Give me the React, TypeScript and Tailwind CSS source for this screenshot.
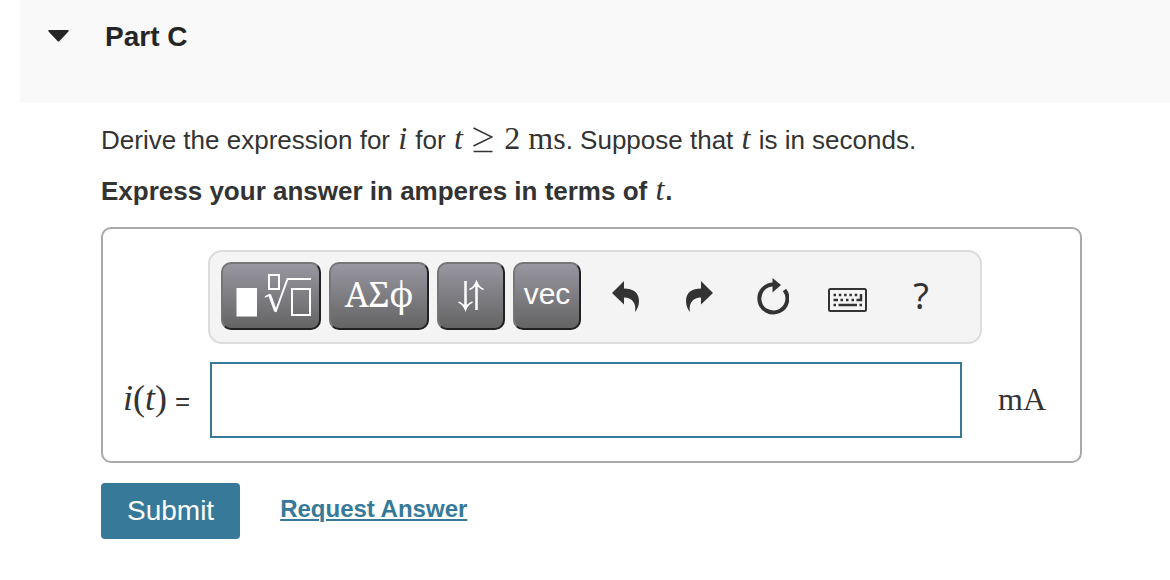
import { useState, type ReactNode } from "react";

function MathVar({ children }: { children: ReactNode }) {
  return (
    <span className="mx-px font-['Liberation_Serif',serif] text-[32px] leading-none font-normal italic">
      {children}
    </span>
  );
}

function MathText({ children }: { children: ReactNode }) {
  return (
    <span className="font-['Liberation_Serif',serif] text-[32px] leading-none font-normal">
      {children}
    </span>
  );
}

function PaletteButton({ label, wide, children }: { label: string; wide?: boolean; children: ReactNode }) {
  return (
    <button
      type="button"
      aria-label={label}
      className={`${wide ? "w-25" : "w-17"} flex h-17 shrink-0 items-center justify-center rounded-[10px] border-2 border-t-[#767676] border-r-[#212121] border-b-[#212121] border-l-[#767676] bg-linear-to-b from-[#9a98a2] to-[#636363] bg-origin-border text-white`}
    >
      {children}
    </button>
  );
}

function ToolButton({ label, children }: { label: string; children: ReactNode }) {
  return (
    <button type="button" aria-label={label} className="flex h-17 w-[74px] shrink-0 items-center justify-center text-[#333]">
      {children}
    </button>
  );
}

function TemplatesIcon() {
  return (
    <svg width="80" height="44" viewBox="-2 0 80 44" className="shrink-0" fill="none" stroke="currentColor" aria-hidden="true">
      <rect x="3.500" y="14" width="20.500" height="28.500" fill="currentColor" stroke="none" />
      <rect x="36" y="1" width="10" height="14" strokeWidth="2" />
      <path d="M32 23L37 20.500" strokeWidth="1.500" />
      <path d="M36.500 20.500L42.500 37" strokeWidth="3" />
      <path d="M42.500 38L54.500 5H78" strokeWidth="2" />
      <rect x="59" y="15" width="18" height="26" strokeWidth="2" />
    </svg>
  );
}

function ArrowsIcon() {
  return (
    <svg width="28" height="32" viewBox="0 0 28 32" fill="none" stroke="currentColor" aria-hidden="true">
      <path d="M8.500 1V27M19.500 30V4" strokeWidth="2.500" />
      <path d="M1.500 22Q7 24.500 8.500 29.500Q10 24.500 15.500 22M12.500 9.500Q18 7 19.500 2Q21 7 26.500 9.500" strokeWidth="1.500" />
      <path d="M5 24.500L8.500 31L12 24.500ZM16 7L19.500 .5L23 7Z" fill="currentColor" stroke="none" />
    </svg>
  );
}

function CurvedArrowIcon() {
  return (
    <path
      d="M0 12L12 0V7.500C21 7.500 27 11.500 27 20C27 24.500 25.500 28 23 31C24.500 23.500 21 16.500 12 16.500V23.500Z"
      fill="currentColor"
    />
  );
}

export default function App() {
  const [open, setOpen] = useState(true);
  const [answer, setAnswer] = useState("");

  return (
    <main className="bg-white font-['Liberation_Sans',Arial,sans-serif] text-[26px] text-[#333]">
      <header className="ml-5 bg-[#f9f9f9] px-7 pt-[17px] pb-[46px]">
        <h2>
          <button
            type="button"
            aria-expanded={open}
            onClick={() => setOpen(!open)}
            className="flex items-center gap-9 text-[28px] leading-10 font-bold text-[#252525]"
          >
            <svg width="21" height="14" viewBox="0 0 21 14" className={open ? "" : "-rotate-90"} aria-hidden="true">
              <path d="M1 0H20Q21.500 .5 20 2L11.500 11Q10.500 12 9.500 11L1 2Q-.5 .5 1 0Z" fill="currentColor" />
            </svg>
            Part C
          </button>
        </h2>
      </header>

      {open && (
        <section className="pt-[19px] pr-22 pl-[101px]">
          <p className="leading-9">
            Derive the expression for <MathVar>i</MathVar> for <MathVar>t</MathVar>{" "}
            <svg width="20" height="26" viewBox="0 0 20 26" className="mr-1 -mb-1 ml-0.5 inline align-baseline" role="img" aria-label="is at least">
              <path d="M.5 1L19 10L.5 19M.5 24.500H19.500" fill="none" stroke="currentColor" strokeWidth="1.500" />
            </svg>{" "}
            <MathText>2 ms</MathText>. Suppose that <MathVar>t</MathVar> is in seconds.
          </p>
          <p className="mt-[15px] leading-9 font-bold">
            Express your answer in amperes in terms of <MathVar>t</MathVar>.
          </p>

          <div className="mt-[18px] grid grid-cols-[105px_minmax(0,1fr)_98px] items-center gap-y-[18px] rounded-[10px] border-2 border-[#a9a9a9] pt-[21px] pb-[23px]">
            <div role="toolbar" aria-label="Equation tools" className="col-start-2 flex items-center rounded-[14px] border-2 border-[#dcdcdc] bg-[#f4f4f4] px-[11px] pt-2.5 pb-3">
              <div className="flex gap-2">
                <PaletteButton label="Templates" wide><TemplatesIcon /></PaletteButton>
                <PaletteButton label="Symbols" wide>
                  <span className="pb-1 font-['Noto_Serif','DejaVu_Serif',serif] text-[34px] leading-none">ΑΣϕ</span>
                </PaletteButton>
                <PaletteButton label="Arrows"><ArrowsIcon /></PaletteButton>
                <PaletteButton label="Vector"><span className="pb-1 text-[30px] leading-8">vec</span></PaletteButton>
              </div>
              <div className="ml-[7px] flex">
                <ToolButton label="Undo">
                  <svg width="27" height="31" viewBox="0 0 27 31" aria-hidden="true"><CurvedArrowIcon /></svg>
                </ToolButton>
                <ToolButton label="Redo">
                  <svg width="27" height="31" viewBox="0 0 27 31" aria-hidden="true">
                    <g transform="matrix(-1 0 0 1 27 0)"><CurvedArrowIcon /></g>
                  </svg>
                </ToolButton>
                <ToolButton label="Reset">
                  <svg width="32" height="37" viewBox="0 0 32 37" fill="none" aria-hidden="true">
                    <path d="M27.500 12A14 14 0 1 1 17 6.500" stroke="currentColor" strokeWidth="4" />
                    <path d="M15.500 0L24 7L15.500 14.500Z" fill="currentColor" />
                  </svg>
                </ToolButton>
                <ToolButton label="Keyboard shortcuts">
                  <svg width="39" height="24" viewBox="0 0 39 24" fill="none" stroke="currentColor" className="mt-2" aria-hidden="true">
                    <rect x="1" y="1" width="37" height="22" rx="1.500" strokeWidth="2" />
                    <path d="M5.500 7H31M5.500 17H8M31.500 17H34" strokeWidth="2.500" strokeDasharray="2.500 2.800" />
                    <path d="M5.500 12H10M12.500 12H15M18 12H20.500M23.500 12H26M28.500 12H33V6M10.500 17H29" strokeWidth="2.500" />
                  </svg>
                </ToolButton>
                <ToolButton label="Help"><span className="font-['Noto_Sans',sans-serif] text-[36px] leading-none">?</span></ToolButton>
              </div>
            </div>

            <label htmlFor="answer" className="col-start-1 row-start-2 flex items-baseline gap-2 pl-5 whitespace-nowrap">
              <span className="font-['Liberation_Serif',serif] text-[36px] leading-none"><i>i</i>(<i>t</i>)</span>
              <span>=</span>
            </label>
            <input
              id="answer"
              type="text"
              value={answer}
              onChange={(e) => setAnswer(e.target.value)}
              className="row-start-2 mr-5 ml-0.5 h-19 border-2 border-[#367999] bg-white px-3 outline-none"
            />
            <span className="row-start-2 pb-0.5 pl-4 font-['Liberation_Serif',serif] text-[32px]">mA</span>
          </div>

          <div className="mt-5 flex items-center gap-10">
            <button type="button" className="h-14 rounded-sm bg-[#367999] px-[26px] text-[28px] text-white">Submit</button>
            <a href="#request-answer" className="pb-1 text-[24px] leading-8 font-bold text-[#367999] underline decoration-2 underline-offset-2">
              Request Answer
            </a>
          </div>
        </section>
      )}
    </main>
  );
}
